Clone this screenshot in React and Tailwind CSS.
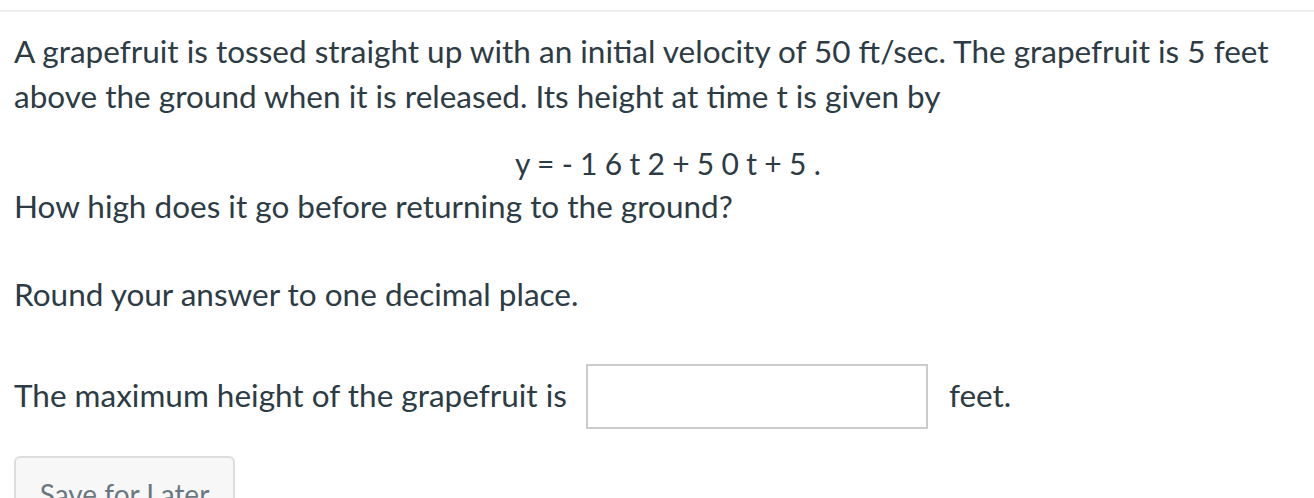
import React from "react";

const App = () => {
  return (
    <div className="w-[1314px] h-[498px] overflow-hidden bg-white text-[#2d3b45] font-['Lato','Open_Sans',sans-serif]">
      <div className="h-[10px]" />
      <div className="h-[2px] bg-[#eeeeee]" />
      <div className="pl-[14px] pr-[20px] pt-[17px] text-[31.5px] leading-[45px]">
        <p>
          A grapefruit is tossed straight up with an initial velocity of 50 ft/sec. The grapefruit is 5 feet
          above the ground when it is released. Its height at time t is given by
        </p>
        <div className="mt-[22px] h-[43px] pl-[501px] whitespace-pre text-[30px] tracking-[-0.2px]">y = - 1 6 t 2 + 5 0 t + 5 .</div>
        <p>How high does it go before returning to the ground?</p>
        <p className="mt-[43px]">Round your answer to one decimal place.</p>
        <div className="mt-[47px] flex items-center">
          <span className="-mt-[3px]">The maximum height of the grapefruit is</span>
          <input
            type="text"
            className="ml-[19px] w-[342px] h-[65px] border-2 border-[#cccccc] bg-white outline-none"
          />
          <span className="ml-[21px] -mt-[3px]">feet.</span>
        </div>
        <button
          type="button"
          className="mt-[27px] w-[221px] h-[70px] rounded-[6px] border-2 border-[#dddddd] bg-[#f7f7f7] text-[#6b7780] text-[28px] leading-[40px] flex items-start justify-center"
        >
          <span className="mt-[16px]">Save for Later</span>
        </button>
      </div>
    </div>
  );
};

export default App;
